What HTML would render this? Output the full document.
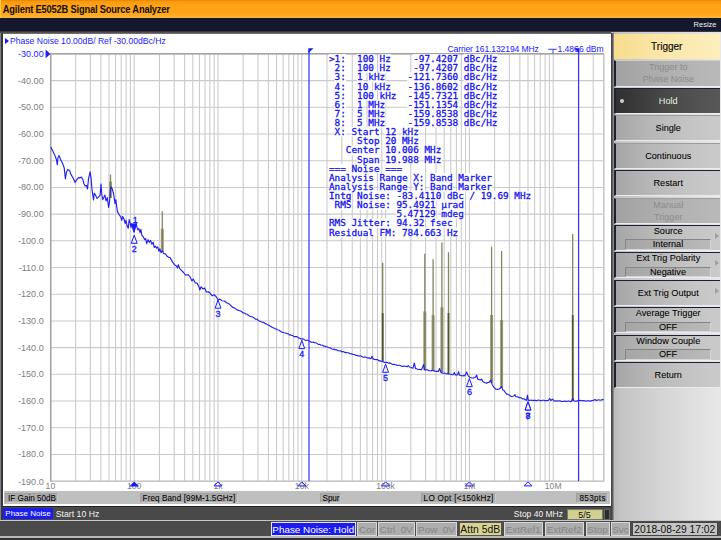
<!DOCTYPE html>
<html><head><meta charset="utf-8"><title>Agilent E5052B Signal Source Analyzer</title>
<style>
html,body{margin:0;padding:0;background:#000;}
body{width:721px;height:540px;overflow:hidden;position:relative;font-family:"Liberation Sans",sans-serif;font-size:9.5px;color:#000;}
#root{position:absolute;left:0;top:0;width:721px;height:540px;overflow:hidden;background:#3c3c3c;}
#title{position:absolute;left:0;top:0;width:721px;height:18px;background:linear-gradient(#e08206 0%,#f8980e 8%,#ffa214 28%,#ffa418 70%,#ffab24 86%,#ffbc3c 95%,#f4a422 100%);border-left:1.3px solid #ffcc3c;box-sizing:border-box;}
#title span{position:absolute;left:1.8px;top:4.3px;transform:scaleY(1.08);transform-origin:0 75%;font-weight:bold;font-size:9.3px;letter-spacing:-0.17px;line-height:12px;color:#111;white-space:nowrap;}
#menu{position:absolute;left:0;top:18.3px;width:721px;height:13.2px;background:#15182c;}
#menu span{position:absolute;right:4.5px;top:1.2px;color:#f0f0f0;font-size:7.5px;line-height:12px;}
#sep{position:absolute;left:0;top:31px;width:721px;height:4px;background:linear-gradient(#2a2c38 0%,#5a5a5a 45%,#9a9a9a 100%);}
#win{position:absolute;left:0;top:34px;width:611.2px;height:473.3px;background:#fff;box-sizing:border-box;}
#lb{position:absolute;left:0;top:33px;width:3.1px;height:506px;background:linear-gradient(90deg,#80808e 0,#80808e 34%,#383838 40%,#383838 100%);}
#plot{position:absolute;left:0;top:0;}
#plot text{font-family:"Liberation Sans",sans-serif;font-size:9.05px;fill:#808080;}
#plot .yl{text-anchor:end;}
#plot .b{fill:#1a1aff;}
#plot .xl{text-anchor:middle;font-size:8.6px}
#plot .mn{text-anchor:middle;fill:#1a1aff;font-size:9px;stroke:#1a1aff;stroke-width:.3px;}
#hdr{position:absolute;left:10px;top:36px;font-size:8.6px;line-height:11px;color:#1a1aff;white-space:nowrap;}
#hdr i{position:absolute;left:-4.8px;top:1.6px;width:0;height:0;border-left:4.3px solid #1a1aff;border-top:3.8px solid transparent;border-bottom:3.8px solid transparent;}
#carrier,#carrier2{position:absolute;left:447.5px;top:44px;font-size:8.6px;line-height:11px;color:#1a1aff;white-space:nowrap;}
#carrier{letter-spacing:-.13px}
#carrier2{left:557.4px;}
#mt{position:absolute;left:329px;top:54.2px;font-family:"DejaVu Sans Mono","Liberation Mono",monospace;font-size:9.34px;line-height:9.13px;color:#1414f0;white-space:pre;-webkit-text-stroke:.3px #1414f0;}
#mt div{height:9.13px;}
#right{position:absolute;left:611px;top:31.5px;width:110px;height:490px;background:linear-gradient(90deg,#b6b6b6 0%,#c4c4c4 8%,#d8d8d8 55%,#e8e8e8 100%);}
#rb{position:absolute;left:611px;top:33px;width:2.8px;height:488px;background:linear-gradient(90deg,#3c3c3c 0%,#505050 40%,#a0a0a0 100%);}
#trig{position:absolute;left:614px;top:34px;width:105.5px;height:25px;background:linear-gradient(90deg,#f8dc8e,#fbe6a6 40%,#fdeebc);text-align:center;font-size:10px;line-height:25px;color:#111;-webkit-text-stroke:.2px #111;}
.key{position:absolute;left:614px;width:105.5px;height:26.2px;background:linear-gradient(90deg,#a6a6a6 0%,#b6b6b6 30%,#c4c4c4 70%,#cacaca 100%);padding-left:1px;border-top:1.4px solid #1c1f38;border-left:2.8px solid #1c1f38;border-bottom:1px solid #ececec;box-sizing:border-box;text-align:center;font-size:9.15px;color:#000;}
.key .one{line-height:24px;-webkit-text-stroke:.06px #000;}
.key .two{line-height:12px;padding-top:0px;}
.key.dis{color:#8c8c8c;background:linear-gradient(90deg,#a2a2a2,#b0b0b0 50%,#b9b9b9);}
.key.first{border-top-color:#cfcfcf;}
.key.nd{border-top-color:#9c9c9c;}
.key.sel{background:linear-gradient(90deg,#303030,#4a4a4a 50%,#585858);color:#e8f0e0;}
.key.sel .one{-webkit-text-stroke:0;}
.key .l1{line-height:11.5px;height:11.5px;-webkit-text-stroke:.06px #000;}
.key .vb{position:absolute;left:9.2px;right:8.7px;top:13.6px;height:10.6px;line-height:9.6px;background:linear-gradient(90deg,#a6a6a6,#b9b9b9);border-top:1px solid #858585;border-left:1px solid #858585;border-bottom:1px solid #d6d6d6;border-right:1px solid #d6d6d6;box-sizing:border-box;-webkit-text-stroke:.06px #000;}
.dot{position:absolute;left:4px;top:10px;width:4px;height:4px;border-radius:50%;background:#d0d0d0;}
.arr{position:absolute;right:0.5px;top:7px;width:0;height:0;border-left:4px solid #a0a0a0;border-top:3.5px solid transparent;border-bottom:3.5px solid transparent;}
#st1{position:absolute;left:3.9px;top:491.3px;width:605.9px;height:13.2px;background:#bfbfbf;}
.sb{position:absolute;top:1.3px;height:10.8px;line-height:9px;font-size:8.15px;background:#ababab;border:1px solid #a0a0a0;border-bottom-color:#c8c8c8;border-right-color:#c8c8c8;box-sizing:border-box;padding:0 2px;white-space:nowrap;-webkit-text-stroke:.06px #000;}
#st2{position:absolute;left:0;top:506px;width:611.5px;height:14.5px;background:#494949;border-top:.8px solid #222;box-sizing:border-box;color:#f2f2f2;font-size:8.5px;line-height:10px;}
#st2 .pn{position:absolute;left:3px;top:1.4px;width:50px;height:10.7px;line-height:12px;font-size:8px;background:#1c1cf0;color:#fff;text-align:center;white-space:nowrap;}
#st2 .s1{position:absolute;left:55.8px;top:2.2px;white-space:nowrap;font-size:8.7px}
#st2 .s2{position:absolute;right:48.5px;top:2.2px;white-space:nowrap;}
#st2 .cnt{position:absolute;left:566.5px;top:1.6px;width:36px;height:11px;line-height:10.5px;background:#d2d08e;color:#111;text-align:center;border:1px solid #777;box-sizing:border-box;font-size:9px}
#st2 .sq{position:absolute;left:604px;top:1.5px;width:6px;height:11.5px;background:#2a2a2a;border:1px solid #666;box-sizing:border-box;}
#bot{position:absolute;left:0;top:519.9px;width:721px;height:20.1px;background:#4b4b4b;border-top:1.4px solid #c6c6c6;box-sizing:border-box;}
#bot:after{content:"";position:absolute;left:0;bottom:0;width:100%;height:3.5px;background:linear-gradient(#b8b8b8 0,#b8b8b8 58%,#333 62%,#333 100%);}
.bb{position:absolute;top:1.5px;height:13.8px;line-height:13.6px;font-size:9.9px;box-sizing:border-box;border:1px solid #d8d8d8;background:#adadad;color:#868686;white-space:nowrap;text-align:center;overflow:hidden;}
</style></head><body><div id="root">
<div id="title"><span>Agilent E5052B Signal Source Analyzer</span></div>
<div id="menu"><span>Resize</span></div>
<div id="sep"></div>
<div id="win"></div>
<svg id="plot" width="612" height="490" viewBox="0 0 612 490">
<rect x="50.4" y="53.9" width="553.3" height="427.2" fill="#fff"/>
<g stroke="#c9c9c9" stroke-width="1.05"><line x1="50.4" y1="53.9" x2="50.4" y2="481.09999999999997"/><line x1="75.63" y1="53.9" x2="75.63" y2="481.09999999999997"/><line x1="90.38" y1="53.9" x2="90.38" y2="481.09999999999997"/><line x1="100.85" y1="53.9" x2="100.85" y2="481.09999999999997"/><line x1="108.97" y1="53.9" x2="108.97" y2="481.09999999999997"/><line x1="115.61" y1="53.9" x2="115.61" y2="481.09999999999997"/><line x1="121.22" y1="53.9" x2="121.22" y2="481.09999999999997"/><line x1="126.08" y1="53.9" x2="126.08" y2="481.09999999999997"/><line x1="130.37" y1="53.9" x2="130.37" y2="481.09999999999997"/><line x1="134.2" y1="53.9" x2="134.2" y2="481.09999999999997"/><line x1="159.43" y1="53.9" x2="159.43" y2="481.09999999999997"/><line x1="174.18" y1="53.9" x2="174.18" y2="481.09999999999997"/><line x1="184.65" y1="53.9" x2="184.65" y2="481.09999999999997"/><line x1="192.77" y1="53.9" x2="192.77" y2="481.09999999999997"/><line x1="199.41" y1="53.9" x2="199.41" y2="481.09999999999997"/><line x1="205.02" y1="53.9" x2="205.02" y2="481.09999999999997"/><line x1="209.88" y1="53.9" x2="209.88" y2="481.09999999999997"/><line x1="214.17" y1="53.9" x2="214.17" y2="481.09999999999997"/><line x1="218.0" y1="53.9" x2="218.0" y2="481.09999999999997"/><line x1="243.23" y1="53.9" x2="243.23" y2="481.09999999999997"/><line x1="257.98" y1="53.9" x2="257.98" y2="481.09999999999997"/><line x1="268.45" y1="53.9" x2="268.45" y2="481.09999999999997"/><line x1="276.57" y1="53.9" x2="276.57" y2="481.09999999999997"/><line x1="283.21" y1="53.9" x2="283.21" y2="481.09999999999997"/><line x1="288.82" y1="53.9" x2="288.82" y2="481.09999999999997"/><line x1="293.68" y1="53.9" x2="293.68" y2="481.09999999999997"/><line x1="297.97" y1="53.9" x2="297.97" y2="481.09999999999997"/><line x1="301.8" y1="53.9" x2="301.8" y2="481.09999999999997"/><line x1="327.03" y1="53.9" x2="327.03" y2="481.09999999999997"/><line x1="341.78" y1="53.9" x2="341.78" y2="481.09999999999997"/><line x1="352.25" y1="53.9" x2="352.25" y2="481.09999999999997"/><line x1="360.37" y1="53.9" x2="360.37" y2="481.09999999999997"/><line x1="367.01" y1="53.9" x2="367.01" y2="481.09999999999997"/><line x1="372.62" y1="53.9" x2="372.62" y2="481.09999999999997"/><line x1="377.48" y1="53.9" x2="377.48" y2="481.09999999999997"/><line x1="381.77" y1="53.9" x2="381.77" y2="481.09999999999997"/><line x1="385.6" y1="53.9" x2="385.6" y2="481.09999999999997"/><line x1="410.83" y1="53.9" x2="410.83" y2="481.09999999999997"/><line x1="425.58" y1="53.9" x2="425.58" y2="481.09999999999997"/><line x1="436.05" y1="53.9" x2="436.05" y2="481.09999999999997"/><line x1="444.17" y1="53.9" x2="444.17" y2="481.09999999999997"/><line x1="450.81" y1="53.9" x2="450.81" y2="481.09999999999997"/><line x1="456.42" y1="53.9" x2="456.42" y2="481.09999999999997"/><line x1="461.28" y1="53.9" x2="461.28" y2="481.09999999999997"/><line x1="465.57" y1="53.9" x2="465.57" y2="481.09999999999997"/><line x1="469.4" y1="53.9" x2="469.4" y2="481.09999999999997"/><line x1="494.63" y1="53.9" x2="494.63" y2="481.09999999999997"/><line x1="509.38" y1="53.9" x2="509.38" y2="481.09999999999997"/><line x1="519.85" y1="53.9" x2="519.85" y2="481.09999999999997"/><line x1="527.97" y1="53.9" x2="527.97" y2="481.09999999999997"/><line x1="534.61" y1="53.9" x2="534.61" y2="481.09999999999997"/><line x1="540.22" y1="53.9" x2="540.22" y2="481.09999999999997"/><line x1="545.08" y1="53.9" x2="545.08" y2="481.09999999999997"/><line x1="549.37" y1="53.9" x2="549.37" y2="481.09999999999997"/><line x1="553.2" y1="53.9" x2="553.2" y2="481.09999999999997"/><line x1="578.43" y1="53.9" x2="578.43" y2="481.09999999999997"/><line x1="593.18" y1="53.9" x2="593.18" y2="481.09999999999997"/><line x1="603.65" y1="53.9" x2="603.65" y2="481.09999999999997"/><line x1="50.4" y1="53.9" x2="603.6526272732832" y2="53.9"/><line x1="50.4" y1="80.6" x2="603.6526272732832" y2="80.6"/><line x1="50.4" y1="107.3" x2="603.6526272732832" y2="107.3"/><line x1="50.4" y1="134.0" x2="603.6526272732832" y2="134.0"/><line x1="50.4" y1="160.7" x2="603.6526272732832" y2="160.7"/><line x1="50.4" y1="187.4" x2="603.6526272732832" y2="187.4"/><line x1="50.4" y1="214.1" x2="603.6526272732832" y2="214.1"/><line x1="50.4" y1="240.8" x2="603.6526272732832" y2="240.8"/><line x1="50.4" y1="267.5" x2="603.6526272732832" y2="267.5"/><line x1="50.4" y1="294.2" x2="603.6526272732832" y2="294.2"/><line x1="50.4" y1="320.9" x2="603.6526272732832" y2="320.9"/><line x1="50.4" y1="347.6" x2="603.6526272732832" y2="347.6"/><line x1="50.4" y1="374.3" x2="603.6526272732832" y2="374.3"/><line x1="50.4" y1="401.0" x2="603.6526272732832" y2="401.0"/><line x1="50.4" y1="427.7" x2="603.6526272732832" y2="427.7"/><line x1="50.4" y1="454.4" x2="603.6526272732832" y2="454.4"/><line x1="50.4" y1="481.1" x2="603.6526272732832" y2="481.1"/></g>
<path d="M50.8 481.4 V53.699999999999996 H604.0" fill="none" stroke="#a4a4a4" stroke-width="1.5"/><path d="M50.4 481.3 H604.0 V53.9" fill="none" stroke="#c2c2c2" stroke-width="1"/>
<line x1="110.5" y1="174.4" x2="110.5" y2="198" stroke="#85855e" stroke-width="1.3"/><rect x="109.0" y="181.5" width="3" height="16.5" fill="#9b9b7a"/><line x1="110.5" y1="181.5" x2="110.5" y2="198" stroke="#77774e" stroke-width="1"/><line x1="162.3" y1="211.2" x2="162.3" y2="252" stroke="#85855e" stroke-width="1.3"/><rect x="160.8" y="228.7" width="3" height="23.3" fill="#9b9b7a"/><line x1="162.3" y1="228.7" x2="162.3" y2="252" stroke="#77774e" stroke-width="1"/><line x1="382.7" y1="262.7" x2="382.7" y2="361.5" stroke="#85855e" stroke-width="1.3"/><line x1="382.7" y1="313" x2="382.7" y2="361.5" stroke="#55552a" stroke-width="1.8"/><line x1="424.8" y1="253.7" x2="424.8" y2="370" stroke="#85855e" stroke-width="1.3"/><rect x="423.3" y="311.5" width="3" height="58.5" fill="#9b9b7a"/><line x1="424.8" y1="311.5" x2="424.8" y2="370" stroke="#77774e" stroke-width="1"/><line x1="433.1" y1="259.3" x2="433.1" y2="370.8" stroke="#85855e" stroke-width="1.3"/><rect x="431.6" y="315.2" width="3" height="55.6" fill="#9b9b7a"/><line x1="433.1" y1="315.2" x2="433.1" y2="370.8" stroke="#77774e" stroke-width="1"/><line x1="441.9" y1="242.6" x2="441.9" y2="372.5" stroke="#85855e" stroke-width="1.3"/><rect x="440.4" y="307.4" width="3" height="65.1" fill="#9b9b7a"/><line x1="441.9" y1="307.4" x2="441.9" y2="372.5" stroke="#77774e" stroke-width="1"/><line x1="448.5" y1="252.2" x2="448.5" y2="373.6" stroke="#85855e" stroke-width="1.3"/><line x1="448.5" y1="313" x2="448.5" y2="373.6" stroke="#55552a" stroke-width="1.8"/><line x1="491.6" y1="246.7" x2="491.6" y2="383" stroke="#85855e" stroke-width="1.3"/><rect x="490.1" y="315" width="3" height="68.0" fill="#9b9b7a"/><line x1="491.6" y1="315" x2="491.6" y2="383" stroke="#77774e" stroke-width="1"/><line x1="501.6" y1="251" x2="501.6" y2="388" stroke="#85855e" stroke-width="1.3"/><rect x="500.1" y="320" width="3" height="68.0" fill="#9b9b7a"/><line x1="501.6" y1="320" x2="501.6" y2="388" stroke="#77774e" stroke-width="1"/><line x1="572.7" y1="234" x2="572.7" y2="401" stroke="#85855e" stroke-width="1.3"/><line x1="572.7" y1="315" x2="572.7" y2="401" stroke="#55552a" stroke-width="1.8"/>
<g stroke="#3030ff" stroke-width="1.2"><line x1="309.0" y1="50.9" x2="309.0" y2="481.09999999999997"/><line x1="578.6" y1="50.9" x2="578.6" y2="481.09999999999997"/></g><path d="M308.3 48.3 h5.2 l-5.2 5z" fill="#1a1aff"/><path d="M579.3000000000001 48.3 h-5.2 l5.2 5z" fill="#1a1aff"/><path d="M548.4 49.3 H556.8 M553 49.3 V53.6" stroke="#3a3aff" stroke-width="1" fill="none"/>
<g fill="#fff"><rect x="328.7" y="54.2" width="17.5" height="9.3"/><rect x="356.8" y="54.2" width="17.5" height="9.3"/><rect x="379.3" y="54.2" width="11.8" height="9.3"/><rect x="413.0" y="54.2" width="45.6" height="9.3"/><rect x="463.6" y="54.2" width="34.3" height="9.3"/><rect x="334.3" y="63.3" width="11.8" height="9.3"/><rect x="356.8" y="63.3" width="17.5" height="9.3"/><rect x="379.3" y="63.3" width="11.8" height="9.3"/><rect x="413.0" y="63.3" width="45.6" height="9.3"/><rect x="463.6" y="63.3" width="34.3" height="9.3"/><rect x="334.3" y="72.5" width="11.8" height="9.3"/><rect x="356.8" y="72.5" width="6.2" height="9.3"/><rect x="368.0" y="72.5" width="17.5" height="9.3"/><rect x="407.4" y="72.5" width="51.2" height="9.3"/><rect x="463.6" y="72.5" width="34.3" height="9.3"/><rect x="334.3" y="81.6" width="11.8" height="9.3"/><rect x="356.8" y="81.6" width="11.8" height="9.3"/><rect x="373.7" y="81.6" width="17.5" height="9.3"/><rect x="407.4" y="81.6" width="51.2" height="9.3"/><rect x="463.6" y="81.6" width="34.3" height="9.3"/><rect x="334.3" y="90.7" width="11.8" height="9.3"/><rect x="356.8" y="90.7" width="17.5" height="9.3"/><rect x="379.3" y="90.7" width="17.5" height="9.3"/><rect x="407.4" y="90.7" width="51.2" height="9.3"/><rect x="463.6" y="90.7" width="34.3" height="9.3"/><rect x="334.3" y="99.9" width="11.8" height="9.3"/><rect x="356.8" y="99.9" width="6.2" height="9.3"/><rect x="368.0" y="99.9" width="17.5" height="9.3"/><rect x="407.4" y="99.9" width="51.2" height="9.3"/><rect x="463.6" y="99.9" width="34.3" height="9.3"/><rect x="334.3" y="109.0" width="11.8" height="9.3"/><rect x="356.8" y="109.0" width="6.2" height="9.3"/><rect x="368.0" y="109.0" width="17.5" height="9.3"/><rect x="407.4" y="109.0" width="51.2" height="9.3"/><rect x="463.6" y="109.0" width="34.3" height="9.3"/><rect x="334.3" y="118.1" width="11.8" height="9.3"/><rect x="356.8" y="118.1" width="6.2" height="9.3"/><rect x="368.0" y="118.1" width="17.5" height="9.3"/><rect x="407.4" y="118.1" width="51.2" height="9.3"/><rect x="463.6" y="118.1" width="34.3" height="9.3"/><rect x="334.3" y="127.2" width="11.8" height="9.3"/><rect x="351.2" y="127.2" width="28.7" height="9.3"/><rect x="384.9" y="127.2" width="11.8" height="9.3"/><rect x="401.8" y="127.2" width="17.5" height="9.3"/><rect x="356.8" y="136.4" width="23.1" height="9.3"/><rect x="384.9" y="136.4" width="11.8" height="9.3"/><rect x="401.8" y="136.4" width="17.5" height="9.3"/><rect x="345.6" y="145.5" width="34.3" height="9.3"/><rect x="384.9" y="145.5" width="34.3" height="9.3"/><rect x="424.2" y="145.5" width="17.5" height="9.3"/><rect x="356.8" y="154.6" width="23.1" height="9.3"/><rect x="384.9" y="154.6" width="34.3" height="9.3"/><rect x="424.2" y="154.6" width="17.5" height="9.3"/><rect x="328.7" y="163.8" width="17.5" height="9.3"/><rect x="351.2" y="163.8" width="28.7" height="9.3"/><rect x="384.9" y="163.8" width="17.5" height="9.3"/><rect x="328.7" y="172.9" width="45.6" height="9.3"/><rect x="379.3" y="172.9" width="28.7" height="9.3"/><rect x="413.0" y="172.9" width="11.8" height="9.3"/><rect x="429.9" y="172.9" width="23.1" height="9.3"/><rect x="458.0" y="172.9" width="34.3" height="9.3"/><rect x="328.7" y="182.0" width="45.6" height="9.3"/><rect x="379.3" y="182.0" width="28.7" height="9.3"/><rect x="413.0" y="182.0" width="11.8" height="9.3"/><rect x="429.9" y="182.0" width="23.1" height="9.3"/><rect x="458.0" y="182.0" width="34.3" height="9.3"/><rect x="328.7" y="191.2" width="23.1" height="9.3"/><rect x="356.8" y="191.2" width="34.3" height="9.3"/><rect x="396.1" y="191.2" width="45.6" height="9.3"/><rect x="446.7" y="191.2" width="17.5" height="9.3"/><rect x="469.2" y="191.2" width="6.2" height="9.3"/><rect x="480.4" y="191.2" width="28.7" height="9.3"/><rect x="514.2" y="191.2" width="17.5" height="9.3"/><rect x="334.3" y="200.3" width="17.5" height="9.3"/><rect x="356.8" y="200.3" width="34.3" height="9.3"/><rect x="396.1" y="200.3" width="39.9" height="9.3"/><rect x="441.1" y="200.3" width="23.1" height="9.3"/><rect x="396.1" y="209.4" width="39.9" height="9.3"/><rect x="441.1" y="209.4" width="23.1" height="9.3"/><rect x="328.7" y="218.5" width="17.5" height="9.3"/><rect x="351.2" y="218.5" width="39.9" height="9.3"/><rect x="396.1" y="218.5" width="28.7" height="9.3"/><rect x="429.9" y="218.5" width="23.1" height="9.3"/><rect x="328.7" y="227.7" width="45.6" height="9.3"/><rect x="379.3" y="227.7" width="17.5" height="9.3"/><rect x="401.8" y="227.7" width="39.9" height="9.3"/><rect x="446.7" y="227.7" width="11.8" height="9.3"/></g>
<path d="M50.8 147.1 L52.8 151.0 L54.7 154.9 L56.4 159.5 L57.3 164.6 L58.0 157.5 L59.0 155.6 L60.6 159.5 L62.5 163.3 L64.2 167.9 L65.4 178.9 L66.4 172.4 L67.7 169.6 L69.6 170.5 L70.9 174.4 L72.5 177.0 L73.8 179.6 L75.1 182.5 L76.8 179.6 L78.5 177.6 L80.0 177.9 L81.3 177.0 L82.9 179.6 L83.9 183.5 L85.2 186.0 L86.5 185.4 L87.5 189.0 L88.5 178.9 L90.1 171.8 L91.0 177.6 L92.0 189.3 L92.7 194.5 L93.5 199.9 L94.3 193.2 L95.6 195.1 L96.9 198.4 L98.4 197.1 L100.1 195.1 L101.0 184.1 L101.8 194.5 L102.7 199.7 L104.0 197.1 L104.9 195.1 L106.0 201.0 L107.3 197.7 L108.6 207.4 L109.5 202.3 L110.2 191.9 L111.1 186.7 L112.4 189.3 L113.7 194.5 L115.0 203.6 L115.8 199.7 L117.0 208.7 L117.5 211.9 L119.5 215.1 L120.8 217.0 L121.8 220.3 L122.7 216.4 L124.0 219.0 L125.3 223.5 L125.9 220.3 L127.2 226.1 L128.3 228.1 L129.2 219.6 L130.1 222.9 L131.1 227.4 L131.9 223.5 L133.1 229.4 L134.0 232.0 L135.0 227.4 L136.1 222.9 L137.0 227.4 L137.9 230.0 L138.9 228.7 L140.0 232.6 L140.9 229.4 L141.8 235.2 L143.5 237.2 L144.7 239.7 L145.7 238.5 L146.7 243.6 L148.0 239.7 L149.3 242.3 L150.6 240.4 L151.9 244.3 L153.2 242.3 L154.2 247.5 L155.5 246.2 L156.6 248.2 L157.7 246.9 L159.0 251.4 L159.9 248.8 L161.0 252.7 L162.3 250.8 L163.6 253.4 L165.5 254.0 L166.8 256.0 L168.7 257.3 L170.0 257.6 L172.6 262.1 L174.5 264.7 L176.5 266.0 L177.5 268.0 L178.4 264.7 L179.7 268.6 L181.7 270.6 L183.6 272.5 L185.6 275.1 L188.2 274.7 L190.1 277.0 L192.0 280.9 L193.3 279.0 L195.3 282.9 L197.2 283.3 L199.2 287.4 L199.8 290.0 L201.1 286.8 L203.1 289.0 L204.8 288.1 L206.3 292.0 L208.3 291.7 L210.2 293.3 L212.2 295.9 L214.1 294.6 L216.0 296.5 L218.0 299.7 L219.9 299.1 L221.9 300.7 L224.5 301.0 L227.1 303.0 L229.7 304.3 L232.3 307.1 L234.9 308.2 L237.4 310.1 L240.0 310.8 L241.0 311.3 L242.0 311.9 L243.0 312.8 L244.0 312.9 L245.0 313.4 L246.1 314.0 L247.1 314.2 L248.1 315.0 L249.1 315.7 L250.1 316.3 L251.1 316.6 L252.1 316.7 L253.1 317.4 L254.1 317.8 L255.1 318.9 L256.1 319.3 L257.2 319.2 L258.2 320.6 L259.2 321.1 L260.2 321.3 L261.2 321.8 L262.2 322.2 L263.2 322.4 L264.2 322.8 L265.2 323.7 L266.2 323.8 L267.2 324.4 L268.3 325.0 L269.3 325.3 L270.3 326.2 L271.3 326.6 L272.3 327.5 L273.3 327.7 L274.3 328.2 L275.3 328.8 L276.3 329.1 L277.3 329.7 L278.3 330.0 L279.4 330.3 L280.4 331.4 L281.4 331.9 L282.4 332.2 L283.4 332.5 L284.4 332.8 L285.4 333.0 L286.4 333.2 L287.4 333.6 L288.4 333.8 L289.4 334.8 L290.5 334.8 L291.5 335.5 L292.5 335.5 L293.5 336.3 L294.5 336.6 L295.5 336.6 L296.5 336.5 L297.6 337.1 L298.6 338.1 L299.6 338.1 L300.7 338.9 L301.7 338.9 L302.7 339.1 L303.7 339.1 L304.7 339.9 L305.8 340.4 L306.8 340.2 L307.8 340.3 L308.8 341.0 L309.9 341.2 L311.0 342.1 L312.1 342.3 L313.2 342.1 L314.4 342.6 L315.5 342.8 L316.6 343.1 L317.7 343.9 L318.7 344.5 L319.7 344.3 L320.7 345.0 L321.7 345.2 L322.7 345.3 L323.8 346.2 L324.8 346.0 L325.8 346.8 L326.8 346.7 L327.8 347.3 L328.8 347.7 L329.8 347.7 L330.8 348.1 L331.8 349.0 L332.8 349.2 L333.8 349.0 L334.9 349.8 L335.9 349.5 L336.9 350.0 L337.9 350.7 L338.9 350.8 L339.9 351.0 L340.9 350.9 L341.9 352.0 L342.9 351.5 L343.9 351.8 L344.9 352.6 L346.0 352.4 L347.0 352.7 L348.0 352.7 L349.0 353.0 L350.0 353.7 L351.0 353.9 L352.0 353.9 L353.0 354.5 L354.0 354.5 L355.0 354.8 L356.0 355.5 L357.0 355.4 L358.0 355.7 L359.0 356.2 L360.0 355.8 L361.0 356.0 L362.0 356.6 L363.0 357.2 L364.0 357.3 L365.0 357.0 L366.0 357.1 L367.0 357.8 L368.0 358.2 L369.0 357.7 L370.0 358.6 L371.0 358.4 L372.0 356.2 L373.0 358.8 L374.0 359.4 L375.0 359.5 L376.0 359.6 L377.0 359.6 L378.1 359.8 L379.1 361.0 L380.1 360.6 L381.1 361.3 L382.1 361.2 L383.1 361.7 L384.2 362.3 L385.3 362.3 L386.3 362.3 L387.4 362.5 L388.5 363.2 L389.6 362.9 L390.7 363.3 L391.8 363.9 L392.8 364.4 L393.9 364.4 L395.0 364.6 L396.1 364.7 L397.2 365.5 L398.4 365.2 L399.5 365.3 L400.6 365.8 L401.7 366.3 L402.9 366.3 L404.0 366.0 L405.2 366.2 L406.3 366.4 L407.5 366.6 L408.3 365.5 L410.0 367.5 L411.0 367.8 L412.0 367.7 L413.0 368.3 L414.3 363.0 L415.6 368.6 L416.6 368.7 L417.6 369.2 L418.6 369.5 L419.6 369.4 L420.6 369.6 L421.6 369.6 L422.6 367.2 L423.6 364.6 L424.6 370.0 L425.7 369.8 L426.8 369.8 L427.9 369.9 L429.0 370.7 L430.0 370.7 L431.1 371.0 L432.2 370.3 L433.3 370.8 L434.3 371.1 L435.3 371.1 L436.3 371.5 L437.3 371.3 L438.3 371.6 L439.6 368.6 L440.8 372.0 L442.1 373.0 L443.3 373.3 L444.3 373.0 L445.3 373.5 L446.3 373.7 L447.3 373.9 L448.3 373.6 L449.3 374.0 L450.3 374.2 L451.3 374.4 L452.3 374.7 L453.3 374.6 L454.4 372.5 L455.3 375.0 L456.4 374.9 L457.4 375.0 L458.6 371.6 L459.6 375.3 L460.7 375.5 L461.7 375.8 L462.8 375.9 L463.8 375.6 L464.9 375.8 L466.6 372.1 L468.2 375.8 L469.4 376.9 L470.7 377.5 L471.9 378.0 L473.2 378.0 L474.4 377.6 L475.7 377.0 L476.6 375.0 L477.7 379.1 L478.7 379.5 L479.7 379.6 L480.7 380.0 L481.6 379.1 L482.9 381.6 L484.1 382.2 L485.3 382.8 L486.5 383.3 L487.8 382.5 L489.0 382.4 L490.7 380.0 L492.4 385.0 L493.6 386.8 L494.9 388.3 L496.1 389.2 L497.4 389.4 L498.6 389.3 L499.9 388.6 L501.5 386.6 L502.9 390.0 L504.2 390.8 L505.4 392.6 L506.7 394.1 L507.9 394.5 L509.2 395.0 L510.4 396.0 L511.7 396.6 L512.9 396.3 L514.1 395.8 L515.0 394.6 L515.8 396.6 L517.0 396.8 L518.3 397.1 L519.4 397.8 L520.5 397.6 L521.6 398.3 L522.7 398.9 L523.9 398.8 L525.0 399.6 L526.6 400.3 L527.5 395.0 L528.3 400.3 L529.3 400.4 L530.3 400.3 L531.3 400.1 L532.3 400.5 L533.3 400.3 L534.3 400.3 L535.4 400.4 L536.4 400.7 L537.5 400.2 L538.5 400.0 L539.5 400.3 L540.6 400.6 L541.6 400.5 L542.7 400.3 L543.8 400.2 L545.0 400.8 L546.1 400.6 L547.2 400.5 L548.3 400.5 L549.6 398.6 L550.8 400.5 L552.4 399.1 L554.1 400.8 L555.1 401.2 L556.2 400.8 L557.2 401.1 L558.3 401.0 L559.3 400.8 L560.4 401.0 L561.4 401.4 L562.5 401.5 L563.5 401.5 L564.5 401.1 L565.6 401.3 L566.6 401.3 L567.6 401.2 L568.6 401.0 L569.6 401.3 L570.6 401.6 L571.6 401.3 L572.7 398.3 L574.1 401.0 L575.1 401.2 L576.2 401.0 L577.2 401.1 L578.2 400.6 L579.2 400.5 L580.3 400.4 L581.4 400.7 L582.4 400.6 L583.5 400.6 L584.5 400.8 L585.6 401.1 L586.6 401.0 L587.7 400.9 L588.8 400.7 L589.9 401.0 L591.0 401.1 L592.1 400.5 L593.2 400.5 L594.9 399.6 L596.5 400.5 L597.6 400.0 L598.8 399.8 L599.9 400.0 L601.1 400.2 L602.4 399.4 L603.6 399.6" fill="none" stroke="#2222ee" stroke-width="1.15" stroke-linejoin="round"/>
<g fill="none" stroke="#2a2ae6" stroke-width="1"></g>
<text x="43.7" y="56.9" class="yl b">-30.00</text><text x="43.7" y="83.6" class="yl">-40.00</text><text x="43.7" y="110.3" class="yl">-50.00</text><text x="43.7" y="137.0" class="yl">-60.00</text><text x="43.7" y="163.7" class="yl">-70.00</text><text x="43.7" y="190.4" class="yl">-80.00</text><text x="43.7" y="217.1" class="yl">-90.00</text><text x="43.7" y="243.8" class="yl">-100.0</text><text x="43.7" y="270.5" class="yl">-110.0</text><text x="43.7" y="297.2" class="yl">-120.0</text><text x="43.7" y="323.9" class="yl">-130.0</text><text x="43.7" y="350.6" class="yl">-140.0</text><text x="43.7" y="377.3" class="yl">-150.0</text><text x="43.7" y="404.0" class="yl">-160.0</text><text x="43.7" y="430.7" class="yl">-170.0</text><text x="43.7" y="457.4" class="yl">-180.0</text><text x="43.7" y="485.1" class="yl">-190.0</text><text x="50.4" y="489.3" class="xl">10</text><text x="134.2" y="489.3" class="xl">100</text><text x="218.0" y="489.3" class="xl">1k</text><text x="301.8" y="489.3" class="xl">10k</text><text x="385.6" y="489.3" class="xl">100k</text><text x="469.4" y="489.3" class="xl">1M</text><text x="553.2" y="489.3" class="xl">10M</text><path d="M45.6 49.6 l4.8 4.3 l-4.8 4.3z" fill="#1a1aff"/>
<path d="M131.4 223.4 h5.6 l-2.8 9.5z" fill="#1a1aff"/><text x="135.2" y="222.9" class="mn">1</text><path d="M129.2 486.4 h10 l-5 -5z" fill="#1a1aff"/><path d="M134.2 235.1 l2.9 8.2 h-5.8z" fill="#fff" fill-opacity=".55" stroke="#1a1aff" stroke-width="1"/><text x="134.2" y="251.8" class="mn">2</text><path d="M218.0 300.0 l2.9 8.2 h-5.8z" fill="#fff" fill-opacity=".55" stroke="#1a1aff" stroke-width="1"/><text x="218.0" y="316.7" class="mn">3</text><path d="M214.0 485.9 h8 l-4 -4z" fill="#fff" fill-opacity=".5" stroke="#1a1aff" stroke-width="1"/><path d="M301.8 340.4 l2.9 8.2 h-5.8z" fill="#fff" fill-opacity=".55" stroke="#1a1aff" stroke-width="1"/><text x="301.8" y="357.1" class="mn">4</text><path d="M297.8 485.9 h8 l-4 -4z" fill="#fff" fill-opacity=".5" stroke="#1a1aff" stroke-width="1"/><path d="M385.6 364.1 l2.9 8.2 h-5.8z" fill="#fff" fill-opacity=".55" stroke="#1a1aff" stroke-width="1"/><text x="385.6" y="380.8" class="mn">5</text><path d="M381.6 485.9 h8 l-4 -4z" fill="#fff" fill-opacity=".5" stroke="#1a1aff" stroke-width="1"/><path d="M469.4 378.5 l2.9 8.2 h-5.8z" fill="#fff" fill-opacity=".55" stroke="#1a1aff" stroke-width="1"/><text x="469.4" y="395.2" class="mn">6</text><path d="M465.4 485.9 h8 l-4 -4z" fill="#fff" fill-opacity=".5" stroke="#1a1aff" stroke-width="1"/><path d="M528.0 401.8 l2.9 8.2 h-5.8z" fill="#fff" fill-opacity=".55" stroke="#1a1aff" stroke-width="1"/><text x="528.0" y="418.5" class="mn">7</text><path d="M524.0 485.9 h8 l-4 -4z" fill="#fff" fill-opacity=".5" stroke="#1a1aff" stroke-width="1"/><path d="M528.0 401.8 l2.9 8.2 h-5.8z" fill="#fff" fill-opacity=".55" stroke="#1a1aff" stroke-width="1"/><text x="528.0" y="418.5" class="mn">8</text>
</svg>
<div id="hdr"><i></i>Phase Noise 10.00dB/ Ref -30.00dBc/Hz</div>
<div id="carrier">Carrier 161.132194 MHz</div><div id="carrier2">1.4866 dBm</div>
<div id="mt"><div>&gt;1:  100 Hz    -97.4207 dBc/Hz</div><div> 2:  100 Hz    -97.4207 dBc/Hz</div><div> 3:  1 kHz    -121.7360 dBc/Hz</div><div> 4:  10 kHz   -136.8602 dBc/Hz</div><div> 5:  100 kHz  -145.7321 dBc/Hz</div><div> 6:  1 MHz    -151.1354 dBc/Hz</div><div> 7:  5 MHz    -159.8538 dBc/Hz</div><div> 8:  5 MHz    -159.8538 dBc/Hz</div><div> X: Start 12 kHz</div><div>     Stop 20 MHz</div><div>   Center 10.006 MHz</div><div>     Span 19.988 MHz</div><div>=== Noise ===</div><div>Analysis Range X: Band Marker</div><div>Analysis Range Y: Band Marker</div><div>Intg Noise: -83.4110 dBc / 19.69 MHz</div><div> RMS Noise: 95.4921 µrad</div><div>            5.47129 mdeg</div><div>RMS Jitter: 94.32 fsec</div><div>Residual FM: 784.663 Hz</div></div>
<div id="st1">
<div class="sb" style="left:1.2px;width:53px">IF Gain 50dB</div>
<div class="sb" style="left:135.7px;width:98px;letter-spacing:.09px">Freq Band [99M-1.5GHz]</div>
<div class="sb" style="left:315.7px;width:21.5px;letter-spacing:-.1px">Spur</div>
<div class="sb" style="left:416.7px;width:75.5px;letter-spacing:.3px">LO Opt [&lt;150kHz]</div>
<div class="sb" style="left:572.6px;width:31.5px;letter-spacing:.32px">853pts</div>
</div>
<div id="st2"><div class="pn">Phase Noise</div><div class="s1">Start 10 Hz</div><div class="s2">Stop 40 MHz</div><div class="cnt">5/5</div><div class="sq"></div></div>
<div id="lb"></div>
<div id="right"></div><div id="rb"></div>
<div id="trig">Trigger</div>
<div class="key dis first" style="top:60.4px"><div class="two">Trigger to<br>Phase Noise</div></div>
<div class="key sel" style="top:87.8px"><div class="one">Hold</div><i class="dot"></i></div>
<div class="key nd" style="top:115.2px"><div class="one">Single</div></div>
<div class="key nd" style="top:142.7px"><div class="one">Continuous</div></div>
<div class="key " style="top:170.1px"><div class="one">Restart</div></div>
<div class="key dis nd" style="top:197.5px"><div class="two">Manual<br>Trigger</div></div>
<div class="key val arrow" style="top:224.9px"><div class="l1">Source</div><div class="vb">Internal</div><i class="arr"></i></div>
<div class="key val arrow" style="top:252.3px"><div class="l1">Ext Trig Polarity</div><div class="vb">Negative</div><i class="arr"></i></div>
<div class="key arrow" style="top:279.8px"><div class="one">Ext Trig Output</div><i class="arr"></i></div>
<div class="key val" style="top:307.2px"><div class="l1">Average Trigger</div><div class="vb">OFF</div></div>
<div class="key val" style="top:334.6px"><div class="l1">Window Couple</div><div class="vb">OFF</div></div>
<div class="key " style="top:362.0px"><div class="one">Return</div></div>
<div id="bot">
<div class="bb" style="left:270.5px;width:85.5px;background:#1c1cf0;color:#fff;border-color:#e8e8e8">Phase Noise: Hold</div>
<div class="bb" style="left:357px;width:20px">Cor</div>
<div class="bb" style="left:378px;width:36.5px">Ctrl&nbsp; 0V</div>
<div class="bb" style="left:416px;width:41px">Pow&nbsp; 0V</div>
<div class="bb" style="left:458.5px;width:43.5px;background:#d8d490;color:#111;border-color:#555;font-size:10.4px">Attn 5dB</div>
<div class="bb" style="left:503.5px;width:39.5px">ExtRef1</div>
<div class="bb" style="left:544.5px;width:39.5px">ExtRef2</div>
<div class="bb" style="left:585.5px;width:24px">Stop</div>
<div class="bb" style="left:611px;width:19px">Svc</div>
<div class="bb" style="left:631.5px;width:86.5px;background:#c4c4c4;color:#111;border-color:#444;font-size:10.25px">2018-08-29 17:02</div>
</div>
</div></body></html>
